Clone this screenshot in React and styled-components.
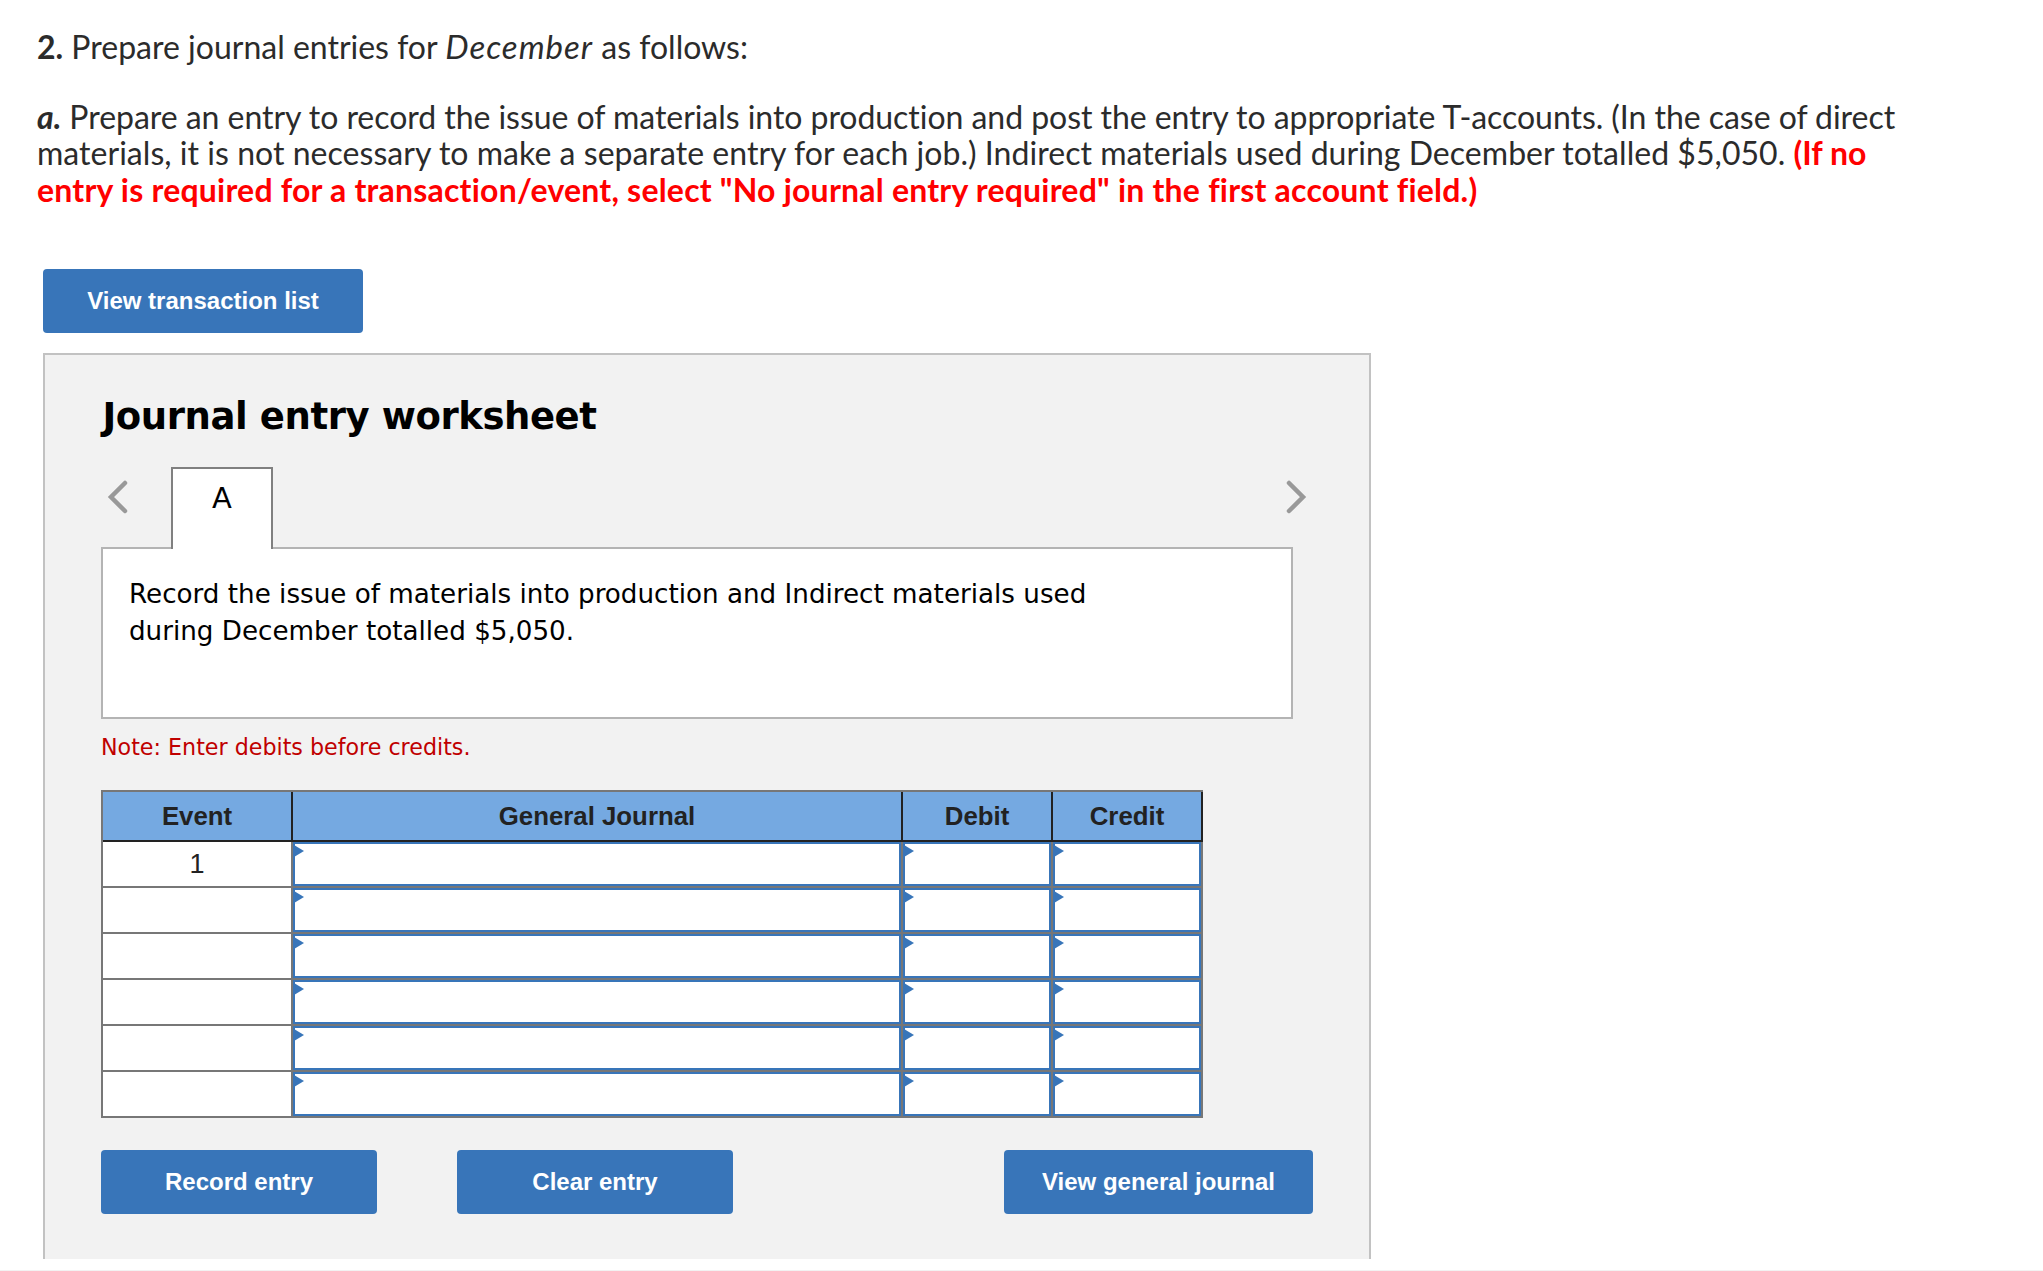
import React from "react";
import styled, { createGlobalStyle } from "styled-components";

const Global = createGlobalStyle`
  html, body { margin: 0; padding: 0; background: #fff; }
  body { font-family: "Liberation Sans", Arial, sans-serif; }
`;

const Page = styled.div`
  width: 2043px;
  height: 1271px;
  box-sizing: border-box;
  border-bottom: 1px solid #f2f2f2;
  overflow: hidden;
`;

const Question = styled.div`
  padding: 27.5px 0 0 37px;
  font-family: Lato, sans-serif;
  font-size: 32px;
  line-height: 36.5px;
  color: #2b2b2b;
  white-space: nowrap;
  font-variant-ligatures: none;
`;

const Intro = styled.div`
  margin-bottom: 33.5px;
`;

const Line = styled.div`
  letter-spacing: ${(p) => p.$track || 0}px;
`;

const Month = styled.em`
  font-size: 33px;
  letter-spacing: 1px;
`;

const Lead = styled.b`
  font-weight: 700;
  font-style: ${(p) => (p.$italic ? "italic" : "normal")};
`;

const Warning = styled.b`
  color: #f00;
  font-weight: 700;
  letter-spacing: ${(p) => p.$track || 0}px;
`;

const Button = styled.button`
  display: block;
  height: 64px;
  width: ${(p) => p.$width}px;
  border: 0;
  border-radius: 4px;
  padding: 0;
  background: #3875b9;
  color: #fff;
  font: bold 24px "Liberation Sans", Arial, sans-serif;
`;

const TopAction = styled.div`
  margin: 61px 0 20px 43px;
`;

const Panel = styled.section`
  box-sizing: border-box;
  margin-left: 43px;
  width: 1328px;
  height: 906px;
  border: 2px solid #c2c2c2;
  border-bottom: 0;
  background: #f2f2f2;
  padding: 0 0 0 56px;
  color: #000;
`;

const Title = styled.h2`
  margin: 0;
  padding: 39px 0 0 1.5px;
  height: 73px;
  font-family: "DejaVu Sans", sans-serif;
  font-weight: 700;
  font-size: 37px;
  letter-spacing: -0.42px;
  line-height: 46px;
`;

const TabBar = styled.div`
  display: flex;
  align-items: flex-start;
  width: 1240px;
  height: 80px;
`;

const Chevron = styled.svg`
  display: block;
  flex: none;
  width: 22px;
  height: 34px;
  margin-top: ${(p) => p.$top}px;
  margin-left: ${(p) => p.$left}px;
  fill: none;
  stroke: #999;
  stroke-width: 4.5;
  stroke-linecap: round;
  stroke-linejoin: miter;
`;

const Tab = styled.div`
  box-sizing: border-box;
  flex: none;
  width: 102px;
  height: 82px;
  margin-left: 43px;
  border: 2px solid #808080;
  border-bottom: 0;
  background: #fff;
  text-align: center;
  position: relative;
  z-index: 1;
  font-family: "DejaVu Sans", sans-serif;
  font-size: 29px;
  line-height: 58px;
`;

const Prompt = styled.div`
  box-sizing: border-box;
  width: 1192px;
  height: 172px;
  border: 2px solid #b4b4b4;
  background: #fff;
  padding: 27px 0 0 26px;
  font-family: "DejaVu Sans", sans-serif;
  font-size: 26.2px;
  line-height: 36.5px;
  white-space: nowrap;
`;

const Note = styled.p`
  margin: 0;
  padding-top: 14px;
  height: 57px;
  font-family: "DejaVu Sans", sans-serif;
  font-size: 22.2px;
  line-height: 28px;
  color: #c00000;
`;

const Sheet = styled.table`
  border-collapse: separate;
  border-spacing: 0;
  table-layout: fixed;
  width: 1102px;
  border-top: 2px solid #777;
  border-left: 2px solid #777;
`;

const Head = styled.th`
  box-sizing: border-box;
  height: 50px;
  width: ${(p) => p.$width}px;
  padding: 0;
  background: #75a9e1;
  border-right: 2px solid #222;
  border-bottom: 2px solid #222;
  font: bold 25.8px "Liberation Sans", Arial, sans-serif;
  color: #222;
`;

const EventCell = styled.td`
  box-sizing: border-box;
  height: 46px;
  padding: 0;
  background: #fff;
  border-right: 2px solid #777;
  border-bottom: 2px solid #777;
  text-align: center;
  font: 27px "Liberation Sans", Arial, sans-serif;
  color: #222;
`;

const EntryCell = styled(EventCell)`
  position: relative;
`;

const EntryBox = styled.div`
  box-sizing: border-box;
  height: 44px;
  border: 2px solid #3875b9;
  background: #fff;
`;

const Flag = styled.span`
  position: absolute;
  left: 1px;
  top: 3px;
  width: 0;
  height: 0;
  border-left: 10px solid #3875b9;
  border-top: 6.5px solid transparent;
  border-bottom: 6.5px solid transparent;
`;

const Actions = styled.div`
  display: flex;
  width: 1212px;
  margin-top: 32px;
`;

const RightAction = styled(Button)`
  margin-left: auto;
`;

const LeftAction = styled(Button)`
  margin-right: 80px;
`;

const Entry = () => (
  <EntryCell>
    <EntryBox />
    <Flag />
  </EntryCell>
);

export default function App() {
  const rows = ["1", "", "", "", "", ""];
  return (
    <>
      <Global />
      <Page>
        <Question>
          <Intro>
            <Lead>2.</Lead> Prepare journal entries for <Month>December</Month> as follows:
          </Intro>
          <Line $track={-0.045}>
            <Lead $italic>a.</Lead> Prepare an entry to record the issue of materials into production and post the entry to appropriate T-accounts. (In the case of direct
          </Line>
          <Line $track={0.04}>
            materials, it is not necessary to make a separate entry for each job.) Indirect materials used during December totalled $5,050. <Warning>(If no</Warning>
          </Line>
          <Line>
            <Warning $track={0.21}>entry is required for a transaction/event, select "No journal entry required" in the first account field.)</Warning>
          </Line>
        </Question>
        <TopAction>
          <Button $width={320}>View transaction list</Button>
        </TopAction>
        <Panel>
          <Title>Journal entry worksheet</Title>
          <TabBar>
            <Chevron $top={13} $left={5} viewBox="0 0 22 34">
              <polyline points="19,3 5,17 19,31" />
            </Chevron>
            <Tab>A</Tab>
            <Chevron $top={13} $left={1013} viewBox="0 0 22 34">
              <polyline points="3,3 17,17 3,31" />
            </Chevron>
          </TabBar>
          <Prompt>
            Record the issue of materials into production and Indirect materials used
            <br />
            during December totalled $5,050.
          </Prompt>
          <Note>Note: Enter debits before credits.</Note>
          <Sheet>
            <thead>
              <tr>
                <Head $width={190}>Event</Head>
                <Head $width={610}>General Journal</Head>
                <Head $width={150}>Debit</Head>
                <Head $width={150}>Credit</Head>
              </tr>
            </thead>
            <tbody>
              {rows.map((value, i) => (
                <tr key={i}>
                  <EventCell>{value}</EventCell>
                  <Entry />
                  <Entry />
                  <Entry />
                </tr>
              ))}
            </tbody>
          </Sheet>
          <Actions>
            <LeftAction $width={276}>Record entry</LeftAction>
            <Button $width={276}>Clear entry</Button>
            <RightAction $width={309}>View general journal</RightAction>
          </Actions>
        </Panel>
      </Page>
    </>
  );
}
